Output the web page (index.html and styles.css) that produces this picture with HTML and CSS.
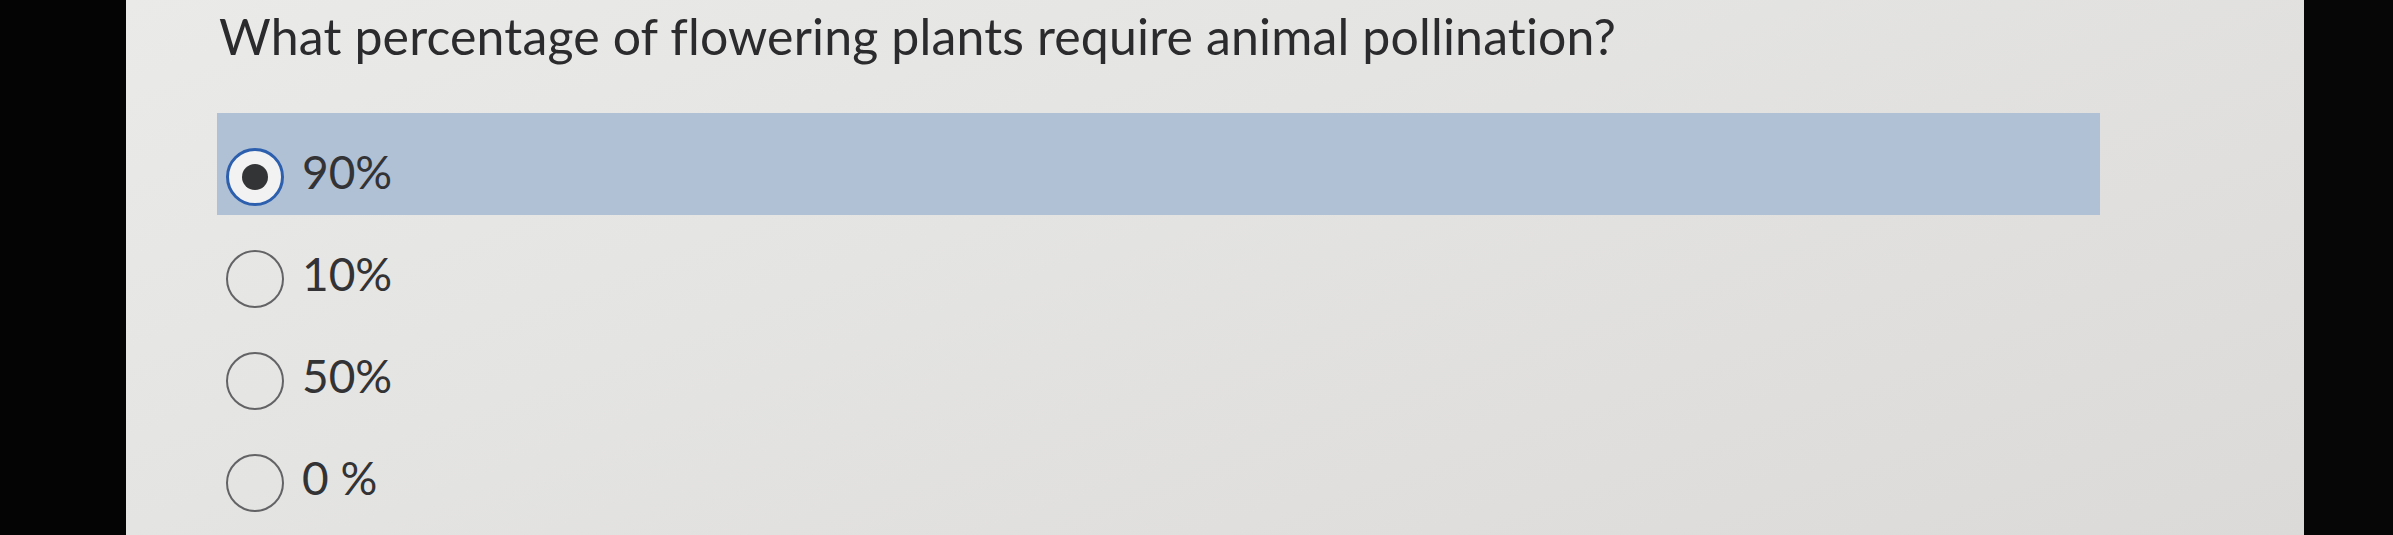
FILE: index.html
```html
<!DOCTYPE html>
<html lang="en">
<head>
<meta charset="utf-8">
<title>Quiz question</title>
<link rel="stylesheet" href="styles.css">
</head>
<body>
<div class="bezel-left"></div>
<main class="screen">
  <h1 class="question">What percentage of flowering plants require animal pollination?</h1>
  <ul class="options">
    <li class="option selected"><span class="radio"><span class="dot"></span></span><span class="label">90%</span></li>
    <li class="option"><span class="radio"></span><span class="label">10%</span></li>
    <li class="option"><span class="radio"></span><span class="label">50%</span></li>
    <li class="option"><span class="radio"></span><span class="label">0 %</span></li>
  </ul>
</main>
<div class="bezel-right"></div>
</body>
</html>
```
FILE: styles.css
```css
html, body {
  margin: 0;
  padding: 0;
  height: 535px;
  overflow: hidden;
}
body {
  background: #050505;
  display: flex;
  font-family: Lato, "Open Sans", "Liberation Sans", sans-serif;
  color: #2b2b2d;
}
.bezel-left {
  width: 126px;
  flex: none;
  background: #040404;
}
.bezel-right {
  flex: 1;
  background: #060606;
}
.screen {
  width: 2178px;
  flex: none;
  background: linear-gradient(160deg, #eaeae8 0%, #e4e4e2 40%, #dcdad9 100%);
  padding-left: 91px;
  box-sizing: border-box;
}
.question {
  margin: 0;
  padding-top: 6px;
  padding-left: 2px;
  font-size: 50px;
  line-height: 60px;
  font-weight: 400;
  letter-spacing: 0.15px;
}
.options {
  list-style: none;
  margin: 47px 0 0 0;
  padding: 0;
  width: 1883px;
}
.option {
  height: 102px;
  box-sizing: border-box;
  padding: 35px 0 9px 9px;
  display: flex;
  align-items: center;
  gap: 18px;
  font-size: 46px;
  color: #333335;
}
.option.selected {
  background: #b0c1d5;
}
.radio {
  width: 58px;
  height: 58px;
  box-sizing: border-box;
  border-radius: 50%;
  border: 2.5px solid #636365;
  flex: none;
  display: flex;
  align-items: center;
  justify-content: center;
}
.selected .radio {
  border: 3px solid #2c5fae;
  background: #f2f2f2;
}
.dot {
  width: 26px;
  height: 26px;
  border-radius: 50%;
  background: #333436;
}
.label {
  line-height: 58px;
  margin-bottom: 10px;
}
```
